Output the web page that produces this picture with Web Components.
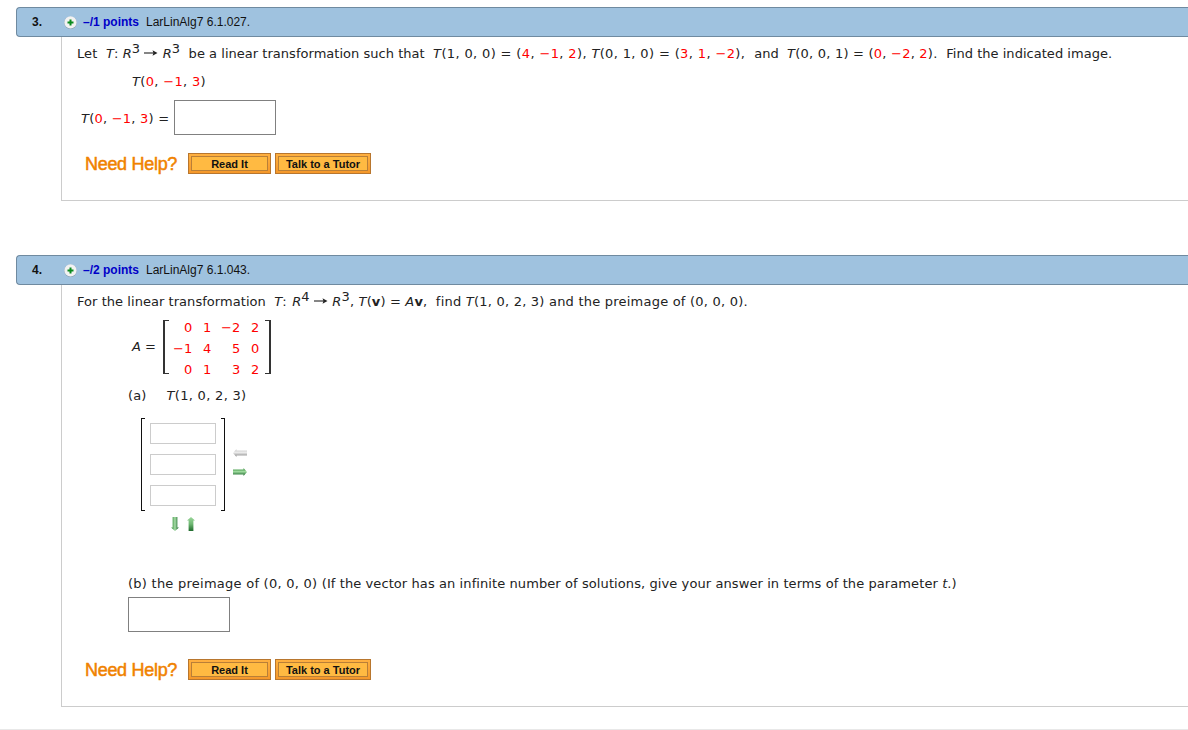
<!DOCTYPE html>
<html><head><meta charset="utf-8">
<style>
html,body{margin:0;padding:0;background:#fff}
body{width:1188px;height:730px;overflow:hidden;font-family:"DejaVu Sans",Verdana,sans-serif;font-size:13px;letter-spacing:.03px;color:#222}
</style></head><body>
<x-page>
<x-question num="3." points="–/1 points" code="LarLinAlg7 6.1.027." height="164">
  <x-row top="10" left="15" h="14"><x-m style="letter-spacing:.1px">Let&nbsp; <x-i>T</x-i>: <x-i>R</x-i><x-sup>3</x-sup> <x-arrow></x-arrow> <x-i>R</x-i><x-sup>3</x-sup>&nbsp; </x-m>be a linear transformation such that&nbsp; <x-m style="letter-spacing:.36px"><x-i>T</x-i>(1, 0, 0) = (<x-r>4</x-r>, <x-r>−1</x-r>, <x-r>2</x-r>), <x-i>T</x-i>(0, 1, 0) = (<x-r>3</x-r>, <x-r>1</x-r>, <x-r>−2</x-r>),&nbsp; </x-m>and&nbsp; <x-m style="letter-spacing:.22px"><x-i>T</x-i>(0, 0, 1) = (<x-r>0</x-r>, <x-r>−2</x-r>, <x-r>2</x-r>).&nbsp; </x-m>Find the indicated image.</x-row>
  <x-row top="14" left="70" h="14"><x-m style="letter-spacing:.33px"><x-i>T</x-i>(<x-r>0</x-r>, <x-r>−1</x-r>, <x-r>3</x-r>)</x-m></x-row>
  <x-row top="11" left="19" h="35"><x-flex><x-lift style="letter-spacing:.22px"><x-i>T</x-i>(<x-r>0</x-r>, <x-r>−1</x-r>, <x-r>3</x-r>)&nbsp;=&nbsp;</x-lift><x-box w="102" h="35"></x-box></x-flex></x-row>
  <x-help top="18"></x-help>
</x-question>
<x-question num="4." points="–/2 points" code="LarLinAlg7 6.1.043." height="422" gap="54">
  <x-row top="10" left="15" h="14"><x-m style="letter-spacing:.05px">For the linear transformation&nbsp; </x-m><x-m style="letter-spacing:.15px"><x-i>T</x-i>: <x-i style="margin-left:1px">R</x-i><x-sup>4</x-sup> <x-arrow></x-arrow> <x-i>R</x-i><x-sup>3</x-sup>, <x-i>T</x-i>(<b>v</b>) = <x-i>A</x-i><b>v</b>,&nbsp; </x-m><x-m style="letter-spacing:.22px">find <x-i>T</x-i>(1, 0, 2, 3) and the preimage of (0, 0, 0).</x-m></x-row>
  <x-row top="11" left="70" h="54"><x-i>A</x-i>&nbsp;=&nbsp;<x-matrix style="margin-left:3px"></x-matrix></x-row>
  <x-row top="15" left="66" h="14"><x-m style="letter-spacing:.15px">(a)<span style="display:inline-block;width:20px"></span></x-m><x-m style="letter-spacing:.3px"><x-i>T</x-i>(1, 0, 2, 3)</x-m></x-row>
  <x-row top="15" left="79" h="119"><x-vector></x-vector></x-row>
  <x-row top="40" left="66" h="14"><x-m style="letter-spacing:.25px">(b) the preimage of (0, 0, 0) </x-m><x-m style="letter-spacing:.09px">(If the vector has an infinite number of solutions, give your answer in terms of the parameter <x-i>t</x-i>.)</x-m></x-row>
  <x-row top="5" left="66" h="35"><x-box w="102" h="35"></x-box></x-row>
  <x-help top="28"></x-help>
</x-question>
</x-page>
<script>
function def(name, css, html, init){
  customElements.define(name, class extends HTMLElement{
    connectedCallback(){
      if(this.shadowRoot) return;
      const r=this.attachShadow({mode:'open'});
      r.innerHTML='<style>'+css+'</style>'+(typeof html==='function'?html(this):html);
      if(init) init(this,r);
    }
  });
}
def('x-page',':host{display:block;height:730px;padding-top:7px;box-sizing:border-box;border-bottom:1px solid #e8e8e8}','<slot></slot>');
def('x-i',':host{font-style:italic}','<slot></slot>');
def('x-m',':host{display:inline}','<slot></slot>');
def('x-r',':host{color:#f00}','<slot></slot>');
def('x-flex',':host{display:flex;align-items:center}','<slot></slot>');
def('x-lift',':host{display:block;margin-top:2px;line-height:14px;white-space:pre}','<slot></slot>');
def('x-sup',':host{font-size:13px;vertical-align:5px;line-height:0}','<slot></slot>');
def('x-arrow',':host{display:inline-block;width:14px;height:8px;vertical-align:1px}svg{display:block}',
 '<svg width="14" height="8" viewBox="0 0 14 8"><path d="M0 4H11" stroke="#222" stroke-width="1.1"/><path d="M8.5 1.2L13.5 4L8.5 6.8L9.5 4Z" fill="#222"/></svg>');
def('x-question',':host{display:block}'+
 '.hd{height:30px;box-sizing:border-box;margin-left:16px;background:#9fc2df;border:1px solid #6f8aa0;border-right:0;border-radius:4px 0 0 4px;display:flex;align-items:center;font:12px "Liberation Sans",Arial,sans-serif;letter-spacing:0;color:#111}'+
 '.n{width:41px;padding-left:15px;box-sizing:border-box;font-weight:bold}'+
 'svg{display:block;margin:0 5px 0 5px;flex:none}'+
 '.p{color:#0000c8;font-weight:bold;width:63px}'+
 '.bd{margin-left:61px;border-left:1px solid #ccc;border-bottom:1px solid #ccc;box-sizing:border-box;display:flow-root}',
 h=>`<div class="hd"><span class="n">${h.getAttribute('num')}</span>
 <svg width="15" height="15" viewBox="0 0 15 15"><circle cx="7.5" cy="7.8" r="6.3" fill="#8aa0b4"/><circle cx="7.5" cy="7.4" r="6.1" fill="#f2f2f2"/><path d="M7.5 4.4v6M4.5 7.4h6" stroke="#0a8a1e" stroke-width="2"/></svg>
 <span class="p">${h.getAttribute('points')}</span><span>${h.getAttribute('code')}</span></div>
 <div class="bd" style="height:${h.getAttribute('height')}px"><slot></slot></div>`,
 h=>{ if(h.getAttribute('gap')) h.style.marginTop=h.getAttribute('gap')+'px'; });
def('x-row',':host{display:flex;align-items:center;white-space:pre}.w{white-space:nowrap;display:block}','<div class="w"><slot></slot></div>',
 h=>{h.style.marginTop=h.getAttribute('top')+'px';h.style.marginLeft=h.getAttribute('left')+'px';h.style.height=h.getAttribute('h')+'px';h.style.lineHeight=h.getAttribute('h')+'px';});
def('x-box',':host{display:inline-block;box-sizing:border-box;border:1px solid #808080;background:#fff;vertical-align:middle}','',
 h=>{h.style.width=h.getAttribute('w')+'px';h.style.height=h.getAttribute('h')+'px';});
def('x-help',':host{display:flex;align-items:center;margin-left:23px;height:21px;font:18px "Liberation Sans",Arial,sans-serif;letter-spacing:-.3px;-webkit-text-stroke:.5px #f08200;color:#f08200}'+
 '.t{width:103px;white-space:nowrap;margin-top:2px}'+
 '.b{box-sizing:border-box;height:21px;background:linear-gradient(#ffb040,#f5982a);border:1px solid #b8762e;padding:2px;margin-right:4px;display:flex;letter-spacing:0;-webkit-text-stroke:0}'+
 '.b span{flex:1;border:1px solid #b97f38;background:#ffba42;color:#111;font:bold 11px/15px "Liberation Sans",Arial,sans-serif;text-align:center}',
 '<span class="t">Need Help?</span><div class="b" style="width:83px"><span>Read It</span></div><div class="b" style="width:96px"><span>Talk to a Tutor</span></div>',
 h=>{h.style.marginTop=h.getAttribute('top')+'px';});
def('x-matrix',':host{display:inline-flex;vertical-align:middle;position:relative;box-sizing:border-box;height:54px;width:108px;color:#f00;line-height:21px;letter-spacing:0}'+
 '.g{display:grid;grid-template-columns:26px 19px 29px 19px;grid-auto-rows:21px;text-align:right;margin:-3px 0 0 3px;font-size:13px;width:93px}'+
 '.l,.r{position:absolute;top:0;bottom:0;width:4px;border:solid #333;border-width:1px 0 1px 2px}.l{left:0}.r{right:0;border-width:1px 2px 1px 0}',
 '<i class="l"></i><div class="g"><span>0</span><span>1</span><span>−2</span><span>2</span><span>−1</span><span>4</span><span>5</span><span>0</span><span>0</span><span>1</span><span>3</span><span>2</span></div><i class="r"></i>');
def('x-vector',':host{display:block;position:relative;width:130px;height:119px}'+
 '.br{width:84px;height:93px;box-sizing:border-box;padding:5px 9px;position:relative;display:flex;flex-direction:column;gap:10px}'+
 '.br input{display:block;box-sizing:border-box;width:66px;height:21px;border:1px solid #ccc;padding:0;margin:0;background:#fff}'+
 '.l,.r{position:absolute;top:0;bottom:0;width:3px;border:solid #111;border-width:1px 0 1px 1px}.l{left:0}.r{right:0;border-width:1px 1px 1px 0}'+
 'svg{position:absolute;display:block}',
 `<div class="br"><i class="l"></i><i class="r"></i><input><input><input></div>
 <svg style="left:92px;top:31px" width="15" height="8" viewBox="0 0 15 8"><defs><linearGradient id="g0" x1="0" y1="0" x2="0" y2="1"><stop offset=".2" stop-color="#d4d4d4"/><stop offset=".45" stop-color="#ececec"/><stop offset=".85" stop-color="#999"/></linearGradient></defs><path d="M0 4L3.5 0V1.6H14V6.4H3.5V8Z" fill="url(#g0)"/></svg>
 <svg style="left:92px;top:50px" width="15" height="8" viewBox="0 0 15 8"><defs><linearGradient id="g1" x1="0" y1="0" x2="0" y2="1"><stop offset=".2" stop-color="#54a558"/><stop offset=".45" stop-color="#a0dca0"/><stop offset=".85" stop-color="#2f7a3c"/></linearGradient></defs><path d="M14 4L10.5 0V1.6H0V6.4H10.5V8Z" fill="url(#g1)"/></svg>
 <svg style="left:30px;top:99px" width="8" height="15" viewBox="0 0 8 15"><defs><linearGradient id="g2" x1="0" y1="0" x2="1" y2="0"><stop offset=".2" stop-color="#54a558"/><stop offset=".5" stop-color="#a8dca8"/><stop offset=".85" stop-color="#2f7a3c"/></linearGradient></defs><path d="M4 14L0 10.5H1.6V0H6.4V10.5H8Z" fill="url(#g2)"/></svg>
 <svg style="left:46px;top:99px" width="8" height="15" viewBox="0 0 8 15"><defs><linearGradient id="g3" x1="0" y1="0" x2="0" y2="1"><stop offset="0" stop-color="#9ad69a"/><stop offset=".5" stop-color="#6fb873"/><stop offset="1" stop-color="#1f6a2c"/></linearGradient></defs><path d="M4 0L0 3.5H1.6V14H6.4V3.5H8Z" fill="url(#g3)"/></svg>`);
</script>
</body></html>
